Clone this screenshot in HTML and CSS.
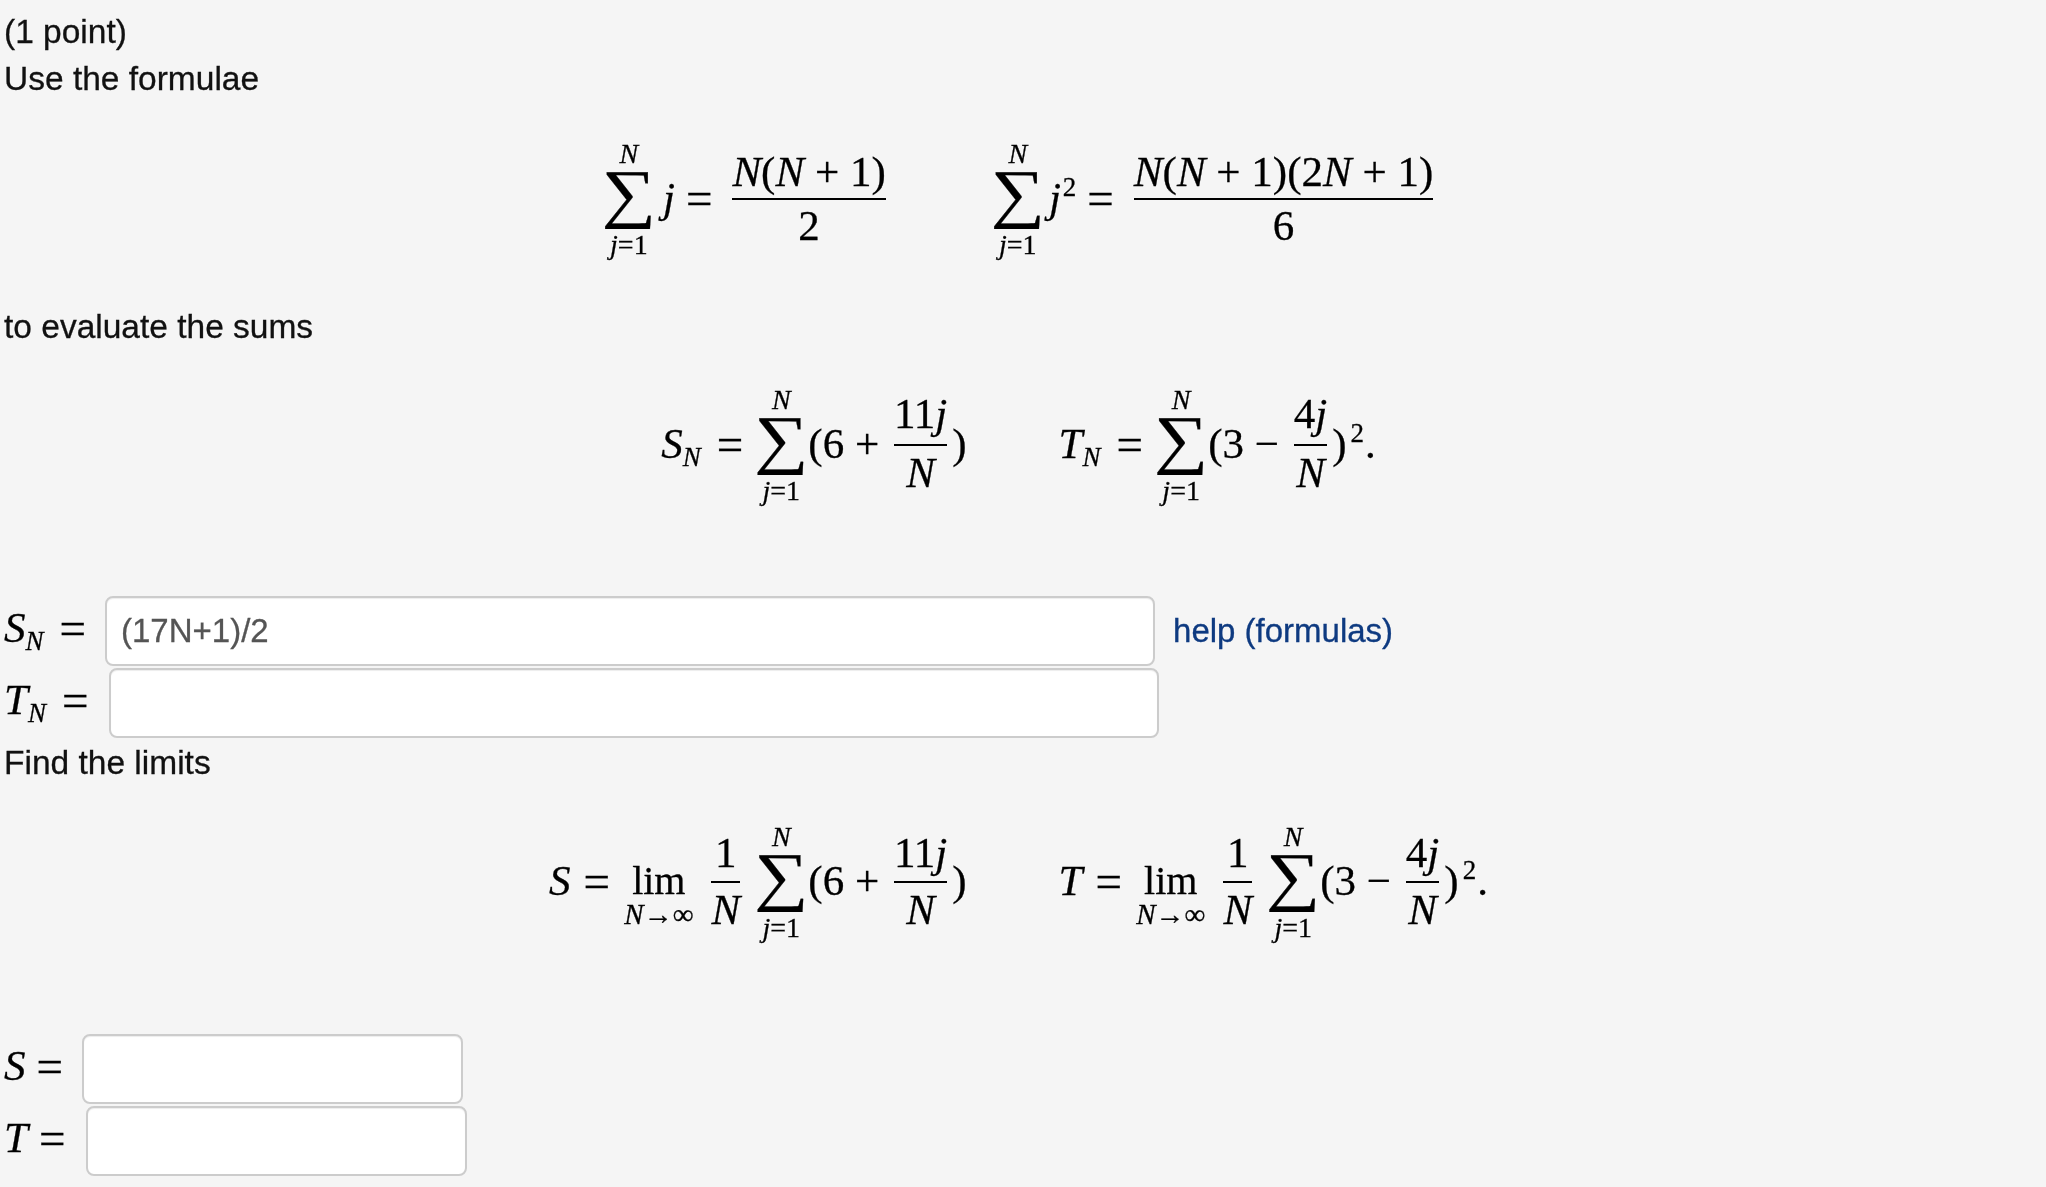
FILE: index.html
```html
<!DOCTYPE html>
<html lang="en">
<head>
<meta charset="utf-8">
<title>Problem</title>
<link rel="stylesheet" href="styles.css">
</head>
<body>
<main class="problem">
  <p class="line">(1 point)</p>
  <p class="line">Use the formulae</p>

  <div class="display d1">
    <div class="eq">
      <span class="sum"><i class="lim-n">N</i><span class="sigma">∑</span><span class="lim-j"><i>j</i>=1</span></span>
      <span class="term tight"><i>j</i></span>
      <span class="op">=</span>
      <span class="frac"><span class="num"><i>N</i>(<i>N</i> + 1)</span><span class="den">2</span></span>
    </div>
    <div class="eq">
      <span class="sum"><i class="lim-n">N</i><span class="sigma">∑</span><span class="lim-j"><i>j</i>=1</span></span>
      <span class="term tight sq"><i>j</i><sup>2</sup></span>
      <span class="op">=</span>
      <span class="frac"><span class="num"><i>N</i>(<i>N</i> + 1)(2<i>N</i> + 1)</span><span class="den">6</span></span>
    </div>
  </div>

  <p class="line">to evaluate the sums</p>

  <div class="display d2">
    <div class="eq">
      <span class="term"><i>S</i><sub><i>N</i></sub></span>
      <span class="op">=</span>
      <span class="sum"><i class="lim-n">N</i><span class="sigma">∑</span><span class="lim-j"><i>j</i>=1</span></span>
      <span class="term lead">(6 + </span>
      <span class="frac"><span class="num">11<i>j</i></span><span class="den"><i>N</i></span></span>
      <span class="term">)</span>
    </div>
    <div class="eq">
      <span class="term"><i>T</i><sub><i>N</i></sub></span>
      <span class="op">=</span>
      <span class="sum"><i class="lim-n">N</i><span class="sigma">∑</span><span class="lim-j"><i>j</i>=1</span></span>
      <span class="term lead">(3 − </span>
      <span class="frac"><span class="num">4<i>j</i></span><span class="den"><i>N</i></span></span>
      <span class="term">)<sup>2</sup>.</span>
    </div>
  </div>

  <div class="answer">
    <span class="term"><i>S</i><sub><i>N</i></sub></span><span class="op">=</span>
    <input class="field wide" type="text" value="(17N+1)/2" aria-label="S N">
    <a class="help" href="#">help (formulas)</a>
  </div>
  <div class="answer after">
    <span class="term"><i>T</i><sub><i>N</i></sub></span><span class="op">=</span>
    <input class="field wide" type="text" aria-label="T N">
  </div>

  <p class="line find">Find the limits</p>

  <div class="display d3">
    <div class="eq">
      <span class="term"><i>S</i></span>
      <span class="op">=</span>
      <span class="limit"><span class="lim-word">lim</span><span class="lim-under"><i>N</i>→∞</span></span>
      <span class="frac"><span class="num">1</span><span class="den"><i>N</i></span></span>
      <span class="sum"><i class="lim-n">N</i><span class="sigma">∑</span><span class="lim-j"><i>j</i>=1</span></span>
      <span class="term lead">(6 + </span>
      <span class="frac"><span class="num">11<i>j</i></span><span class="den"><i>N</i></span></span>
      <span class="term">)</span>
    </div>
    <div class="eq">
      <span class="term"><i>T</i></span>
      <span class="op">=</span>
      <span class="limit"><span class="lim-word">lim</span><span class="lim-under"><i>N</i>→∞</span></span>
      <span class="frac"><span class="num">1</span><span class="den"><i>N</i></span></span>
      <span class="sum"><i class="lim-n">N</i><span class="sigma">∑</span><span class="lim-j"><i>j</i>=1</span></span>
      <span class="term lead">(3 − </span>
      <span class="frac"><span class="num">4<i>j</i></span><span class="den"><i>N</i></span></span>
      <span class="term">)<sup>2</sup>.</span>
    </div>
  </div>

  <div class="answer">
    <span class="term"><i>S</i></span><span class="op">=</span>
    <input class="field short" type="text" aria-label="S">
  </div>
  <div class="answer after">
    <span class="term"><i>T</i></span><span class="op">=</span>
    <input class="field short" type="text" aria-label="T">
  </div>
</main>
</body>
</html>
```

FILE: styles.css
```css
html, body {
  margin: 0;
  height: 100%;
  background: #f5f5f5;
}

.problem {
  box-sizing: border-box;
  min-height: 1187px;
  padding: 8px 0 0 4px;
  font-family: "Liberation Sans", Arial, sans-serif;
  font-size: 33.5px;
  color: #111;
  overflow: hidden;
  -webkit-text-stroke: 0.3px currentColor;
  filter: blur(0.6px);
}

.line {
  margin: 0;
  height: 47px;
  line-height: 47px;
}
.find { margin-top: 1px; }

.display {
  display: flex;
  justify-content: center;
  align-items: center;
  padding-right: 13px;
  font-family: "Liberation Serif", "Times New Roman", serif;
  font-size: 43px;
  color: #000;
}

.d1 { height: 191px; margin-bottom: 10px; gap: 103px; }
.d2 { height: 188px; margin-bottom: 58px; gap: 92px; }
.d3 { height: 190px; margin-bottom: 58px; gap: 92px; }

.eq {
  display: flex;
  align-items: center;
  white-space: pre;
}

.term { line-height: 50px; }
.tight { margin-left: 7px; }
.tight.sq { margin-left: 4px; }
.lead { margin-right: 2px; }
.frac + .term { margin-left: 3px; }
.frac + .term sup { margin: 0 1px 0 4px; }

.term sub, .term sup {
  font-size: 27px;
  line-height: 0;
}
.term sub { vertical-align: -8px; }
.term sup { vertical-align: 16px; margin-left: 2px; }

.op { font-size: 47px; line-height: 50px; }
.d1 .op { margin: 0 18px 0 11px; }
.d2 .op { margin: 0 11px 0 16px; }
.d3 .op { margin: 0 22px 0 13px; }

.sum {
  display: flex;
  flex-direction: column;
  align-items: center;
  font-size: 28px;
}
.lim-n, .lim-j {
  height: 28px;
  line-height: 28px;
}
.lim-n { margin: 3px 0 -3px; }
.sigma {
  height: 66px;
  line-height: 66px;
  font-size: 76px;
  transform: translateY(-5px) scaleY(0.855);
}

.frac {
  display: flex;
  flex-direction: column;
  align-items: stretch;
  padding: 0 2px;
  text-align: center;
}
.num, .den {
  height: 54px;
}
.num {
  line-height: 48px;
  border-bottom: 2px solid #000;
  margin-bottom: -1px;
}
.den {
  line-height: 58px;
  margin-top: -1px;
}
.d1 .num { line-height: 56px; }
.d1 .den { line-height: 56px; }
.d3 .num { line-height: 51px; }

.limit {
  display: flex;
  flex-direction: column;
  align-items: center;
  margin-right: 24px;
  position: relative;
}
.limit ~ .sum { margin-left: 12px; }
.lim-word { font-size: 40px; line-height: 50px; }
.lim-under {
  position: absolute;
  top: 44px;
  font-size: 29px;
  line-height: 28px;
}

.answer {
  display: flex;
  align-items: center;
  height: 70px;
  font-family: "Liberation Serif", "Times New Roman", serif;
  font-size: 43px;
  color: #000;
  white-space: pre;
}
.answer.after { margin-top: 2px; }
.answer .term, .answer .op { padding-bottom: 6px; }
.answer sub { margin-right: 5px; }
.answer .op { margin: 0 19px 0 11px; }
.answer.after .op { margin-right: 21px; }

.field {
  box-sizing: border-box;
  height: 70px;
  padding: 0 14px;
  border: 2px solid #ccc;
  border-radius: 8px;
  background: #fff;
  box-shadow: inset 0 1px 1px rgba(0, 0, 0, 0.075);
  font-family: "Liberation Sans", Arial, sans-serif;
  font-size: 33px;
  color: #555;
  -webkit-text-stroke: 0.3px currentColor;
}
.wide { width: 1050px; }
.short { width: 381px; }

.help {
  margin-left: 18px;
  font-family: "Liberation Sans", Arial, sans-serif;
  font-size: 33px;
  color: #0e3a80;
  text-decoration: none;
}
```
